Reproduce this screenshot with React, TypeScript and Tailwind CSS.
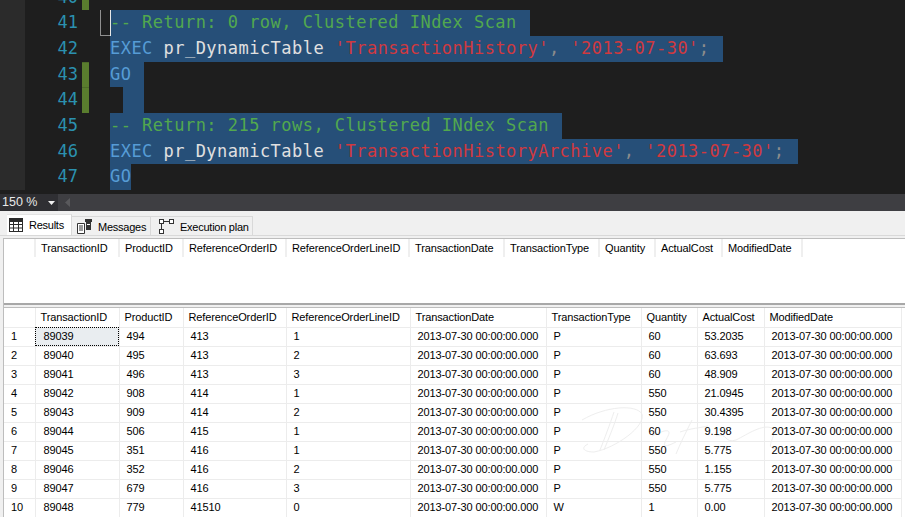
const monoFont = "font-['DejaVu_Sans_Mono',monospace]";

type Tok = { t: string; c: string };

const cm = 'text-[#52a84e]';
const kw = 'text-[#569cd6]';
const id = 'text-[#e0e0e0]';
const st = 'text-[#d0393f]';
const pn = 'text-[#8c8c8c]';

const lines: { n: number; sel: string; change?: boolean; fold?: boolean; toks: Tok[] }[] = [
  { n: 40, sel: '', change: true, toks: [] },
  { n: 41, sel: 'w-[420px]', fold: true, toks: [{ t: '-- Return: 0 row, Clustered INdex Scan', c: cm }] },
  {
    n: 42,
    sel: 'w-[613px]',
    toks: [
      { t: 'EXEC', c: kw },
      { t: ' pr_DynamicTable ', c: id },
      { t: "'TransactionHistory'", c: st },
      { t: ', ', c: pn },
      { t: "'2013-07-30'", c: st },
      { t: ';', c: pn },
    ],
  },
  { n: 43, sel: 'w-[34px]', change: true, toks: [{ t: 'GO', c: kw }] },
  { n: 44, sel: 'w-[21px] ml-[13px]', change: true, toks: [] },
  { n: 45, sel: 'w-[452px]', toks: [{ t: '-- Return: 215 rows, Clustered INdex Scan', c: cm }] },
  {
    n: 46,
    sel: 'w-[688px]',
    toks: [
      { t: 'EXEC', c: kw },
      { t: ' pr_DynamicTable ', c: id },
      { t: "'TransactionHistoryArchive'", c: st },
      { t: ', ', c: pn },
      { t: "'2013-07-30'", c: st },
      { t: ';', c: pn },
    ],
  },
  { n: 47, sel: 'w-[21px]', toks: [{ t: 'GO', c: kw }] },
];

const upperCols = [
  { name: 'TransactionID', w: 'w-[84px]' },
  { name: 'ProductID', w: 'w-[64px]' },
  { name: 'ReferenceOrderID', w: 'w-[103px]' },
  { name: 'ReferenceOrderLineID', w: 'w-[123px]' },
  { name: 'TransactionDate', w: 'w-[95px]' },
  { name: 'TransactionType', w: 'w-[95px]' },
  { name: 'Quantity', w: 'w-[56px]' },
  { name: 'ActualCost', w: 'w-[67px]' },
  { name: 'ModifiedDate', w: 'w-[80px]' },
];

const lowerCols = [
  { name: 'TransactionID', w: 'w-[84px]' },
  { name: 'ProductID', w: 'w-[64px]' },
  { name: 'ReferenceOrderID', w: 'w-[103px]' },
  { name: 'ReferenceOrderLineID', w: 'w-[124px]' },
  { name: 'TransactionDate', w: 'w-[136px]' },
  { name: 'TransactionType', w: 'w-[95px]' },
  { name: 'Quantity', w: 'w-[56px]' },
  { name: 'ActualCost', w: 'w-[67px]' },
  { name: 'ModifiedDate', w: 'w-[137px]' },
];

const D = '2013-07-30 00:00:00.000';
const rows = [
  ['89039', '494', '413', '1', D, 'P', '60', '53.2035', D],
  ['89040', '495', '413', '2', D, 'P', '60', '63.693', D],
  ['89041', '496', '413', '3', D, 'P', '60', '48.909', D],
  ['89042', '908', '414', '1', D, 'P', '550', '21.0945', D],
  ['89043', '909', '414', '2', D, 'P', '550', '30.4395', D],
  ['89044', '506', '415', '1', D, 'P', '60', '9.198', D],
  ['89045', '351', '416', '1', D, 'P', '550', '5.775', D],
  ['89046', '352', '416', '2', D, 'P', '550', '1.155', D],
  ['89047', '679', '416', '3', D, 'P', '550', '5.775', D],
  ['89048', '779', '41510', '0', D, 'W', '1', '0.00', D],
];

function GridIcon() {
  return (
    <svg width="14" height="14" viewBox="0 0 14 14" className="shrink-0">
      <rect x="0.5" y="0.5" width="13" height="13" fill="#fff" stroke="#2a2a2a" />
      <rect x="0.5" y="0.5" width="13" height="3" fill="#2a2a2a" stroke="#2a2a2a" />
      <path d="M4.5 3v10M9.5 3v10M1 6.5h12M1 10h12" stroke="#2a2a2a" strokeWidth="1" fill="none" />
    </svg>
  );
}

function MessagesIcon() {
  return (
    <svg width="15" height="15" viewBox="0 0 15 15" className="shrink-0">
      <path d="M0.5 4.5h7l0 10h-7z" fill="#fff" stroke="#333" />
      <path d="M2 7h4M2 9h4M2 11h4" stroke="#333" strokeWidth="1" />
      <rect x="8" y="0" width="7" height="3" fill="#333" />
      <rect x="9" y="3" width="5" height="8" fill="#333" />
      <rect x="10" y="5" width="3" height="1" fill="#fff" />
    </svg>
  );
}

function PlanIcon() {
  return (
    <svg width="16" height="15" viewBox="0 0 16 15" className="shrink-0">
      <rect x="0.5" y="0.5" width="4" height="4" fill="#fff" stroke="#333" />
      <rect x="10.5" y="0.5" width="4" height="4" fill="#fff" stroke="#333" />
      <rect x="0.5" y="10.5" width="4" height="4" fill="#fff" stroke="#333" />
      <path d="M5 2.5h5M2.5 5v5" stroke="#333" fill="none" />
    </svg>
  );
}

function Tab({ active, label, icon, cls }: { active?: boolean; label: string; icon: React.ReactNode; cls: string }) {
  return (
    <div
      className={`flex items-center border-r border-[#d9d9d9] ${cls} ${
        active ? 'h-[21px] bg-white border-t border-t-[#e3e3e3]' : 'h-[19px] bg-[#f0f0f0] border-t border-t-[#d9d9d9]'
      }`}
    >
      {icon}
      <span className={`text-[11px] tracking-[-0.25px] text-black leading-none whitespace-nowrap ${active ? 'mt-[1px]' : 'mt-[2px]'}`}>
        {label}
      </span>
    </div>
  );
}

export default function App() {
  return (
    <div className="w-[905px] h-[517px] overflow-hidden flex flex-col bg-[#f0f0f0] font-['Liberation_Sans',sans-serif]">
      {/* editor */}
      <div className={`h-[194px] shrink-0 flex flex-col justify-end pb-[4px] overflow-hidden bg-[#1e1e1e] ${monoFont}`}>
        {lines.map((l) => (
          <div key={l.n} className="flex h-[25.7px] shrink-0 leading-[25px]">
            <div className="w-[25px] shrink-0 bg-[#2b2b2b]" />
            <div className="w-[53px] shrink-0 text-right text-[17px] text-[#2b91af]">{l.n}</div>
            <div className="w-[4px] shrink-0" />
            <div className={`w-[7px] shrink-0 ${l.change ? 'bg-[#5a7d2e] border-t border-t-[#4d6b28]' : ''}`} />
            <div className="w-[11px] shrink-0" />
            <div className={`w-[10px] shrink-0 ${l.fold ? 'border-l border-b border-[#8f8f8f] h-[26px]' : ''}`} />
            <div
              className={`h-full whitespace-pre text-[17px] tracking-[0.47px] ${l.sel} ${l.sel ? 'bg-[#264f78]' : ''} ${
                l.fold ? 'shadow-[inset_1px_0_0_#e8e8e8]' : ''
              }`}
            >
              {l.toks.map((t, i) => (
                <span key={i} className={t.c}>
                  {t.t}
                </span>
              ))}
            </div>
          </div>
        ))}
      </div>

      {/* zoom bar */}
      <div className="h-[17px] shrink-0 flex items-center bg-[#3e3e42]">
        <div className="w-[58px] h-full flex items-center justify-between pl-[2px] pr-[3px] bg-[#2f2f33]">
          <span className="text-[12.5px] text-[#e8e8e8]">150 %</span>
          <svg width="7" height="4" viewBox="0 0 7 4" className="mt-[1px]">
            <path d="M0 0h7L3.5 4z" fill="#f0f0f0" />
          </svg>
        </div>
        <svg width="5" height="9" viewBox="0 0 5 9" className="ml-[7px]">
          <path d="M5 0v9L0 4.5z" fill="#59595c" />
        </svg>
      </div>

      {/* tabs */}
      <div className="h-[25px] shrink-0 flex items-end pl-[7px] bg-[#f0f0f0] border-b border-b-[#d9d9d9]">
        <Tab active label="Results" icon={<GridIcon />} cls="w-[65px] pl-[2px] gap-[6px]" />
        <Tab label="Messages" icon={<MessagesIcon />} cls="w-[79px] pl-[5px] gap-[6px]" />
        <Tab label="Execution plan" icon={<PlanIcon />} cls="w-[102px] pl-[8px] gap-[5px]" />
      </div>
      <div className="h-[2px] shrink-0 bg-[#f0f0f0]" />

      {/* results */}
      <div className="flex-1 ml-[3px] flex flex-col bg-white border-l border-l-[#bdbdbd] text-[11px] tracking-[-0.12px] text-black overflow-hidden">
        <div className="h-[67px] shrink-0 border-b-2 border-b-[#a8a8a8] border-t border-t-[#bdbdbd]">
          <div className="flex h-[18px]">
            <div className="w-[32px] border-r-2 border-r-[#efefef]" />
            {upperCols.map((c) => (
              <div key={c.name} className={`${c.w} pl-[5px] leading-[18px] border-r-2 border-r-[#efefef]`}>
                {c.name}
              </div>
            ))}
          </div>
        </div>
        <div className="h-[2px] shrink-0 bg-[#f0f0f0]" />
        <div className="flex-1 relative border-t border-t-[#bdbdbd]">
          {/* faint watermark behind the grid */}
          <svg width="240" height="60" viewBox="0 0 240 60" className="absolute left-[572px] top-[94px]" fill="none" stroke="#eeeeee" strokeWidth="1">
            <path d="M6 18C30 4 60 2 66 12C70 24 40 46 18 50C8 50 4 46 12 42" />
            <path d="M38 10C34 22 28 38 24 48M42 11C38 24 32 38 28 48" />
            <path d="M76 34C88 28 96 26 92 34C88 42 84 48 100 40" />
            <path d="M116 18C110 30 104 42 100 52M104 30C116 26 124 26 132 24" />
            <path d="M140 34C152 30 148 42 160 38C172 32 186 22 196 26C204 30 186 48 200 46" />
          </svg>
          <table className="relative table-fixed border-collapse w-[897px]">
            <thead>
              <tr className="h-[19px]">
                <th className="w-[31px] p-0 border border-[#ececec] border-t-0 border-l-0" />
                {lowerCols.map((c) => (
                  <th key={c.name} className={`${c.w} p-0 pl-[5px] text-left font-normal border border-[#ececec] border-t-0 whitespace-nowrap`}>
                    {c.name}
                  </th>
                ))}
              </tr>
            </thead>
            <tbody>
              {rows.map((r, i) => (
                <tr key={i} className="h-[19px]">
                  <td className="p-0 pl-[7px] border border-[#ececec] border-l-0">{i + 1}</td>
                  {r.map((v, j) => (
                    <td
                      key={j}
                      className={`p-0 border border-[#ececec] whitespace-nowrap ${j === 0 ? 'pl-[8px]' : 'pl-[7px]'} ${
                        i === 0 && j === 0 ? 'bg-[#e9edf0] outline-1 outline-dotted -outline-offset-1 outline-black' : ''
                      }`}
                    >
                      {v}
                    </td>
                  ))}
                </tr>
              ))}
            </tbody>
          </table>
        </div>
      </div>
    </div>
  );
}
